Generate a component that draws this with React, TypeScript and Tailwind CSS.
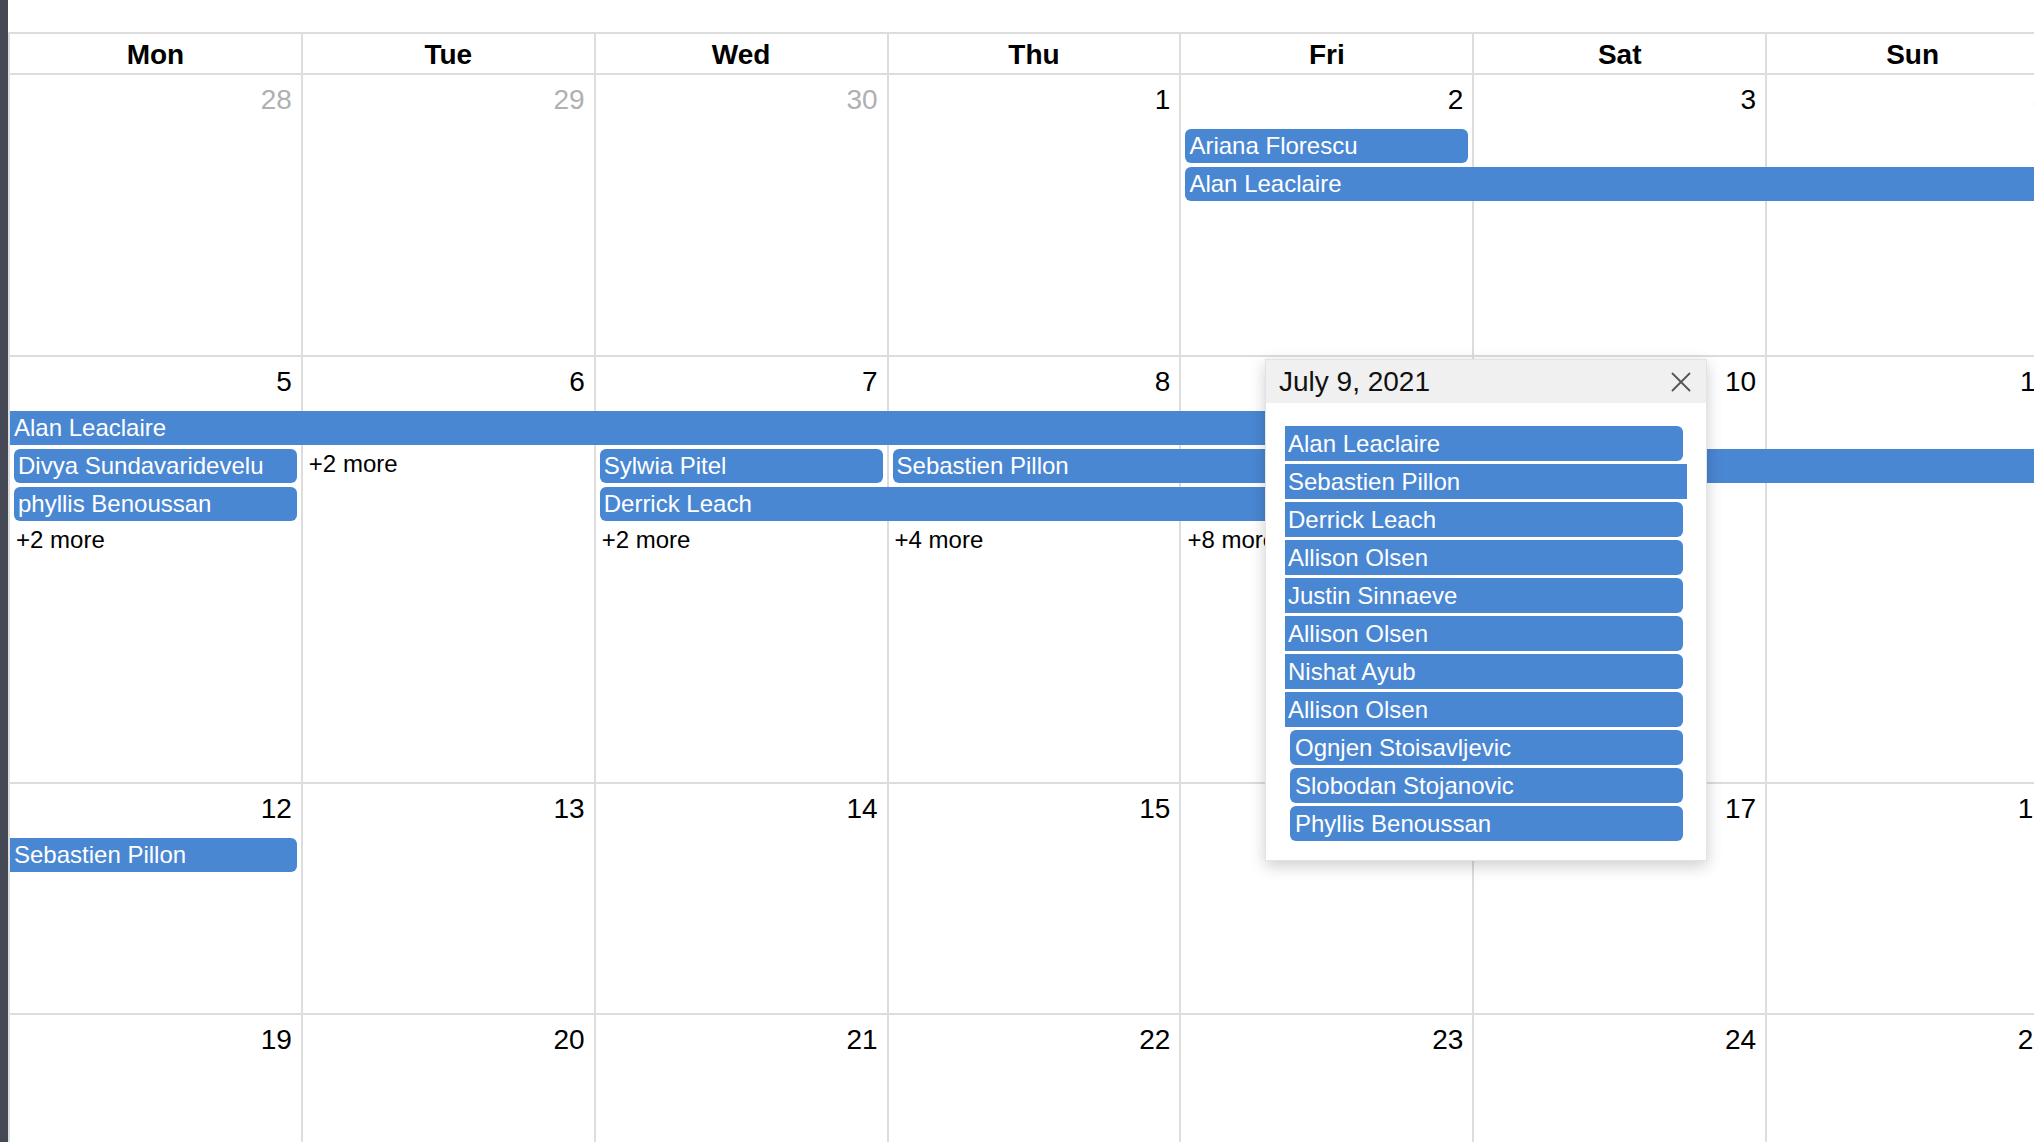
import { X } from 'lucide-react'

type CalEvent = {
  title: string
  col: number
  span?: number
  slot: number
  prior?: boolean
  after?: boolean
}

type MoreLink = { col: number; slot: number; count: number }

type Week = {
  height: string
  days: { n: number; off?: boolean }[]
  events: CalEvent[]
  more: MoreLink[]
}

const DAY_NAMES = ['Mon', 'Tue', 'Wed', 'Thu', 'Fri', 'Sat', 'Sun']

const COL_START: Record<number, string> = {
  1: 'col-start-1',
  2: 'col-start-2',
  3: 'col-start-3',
  4: 'col-start-4',
  5: 'col-start-5',
  6: 'col-start-6',
  7: 'col-start-7',
}

const COL_SPAN: Record<number, string> = {
  1: 'col-span-1',
  2: 'col-span-2',
  3: 'col-span-3',
  4: 'col-span-4',
  5: 'col-span-5',
}

// slot 1 sits in grid row 2 (row 1 holds the date numbers)
const ROW_START: Record<number, string> = {
  1: 'row-start-2',
  2: 'row-start-3',
  3: 'row-start-4',
  4: 'row-start-5',
}

const days = (from: number, offCount = 0) =>
  Array.from({ length: 7 }, (_, i) => {
    if (i < offCount) return { n: from + i, off: true }
    return { n: offCount ? i - offCount + 1 : from + i }
  })

const WEEKS: Week[] = [
  {
    height: 'h-[282px]',
    days: days(28, 3),
    events: [
      { title: 'Ariana Florescu', col: 5, slot: 1 },
      { title: 'Alan Leaclaire', col: 5, span: 3, slot: 2, after: true },
    ],
    more: [],
  },
  {
    height: 'h-[427px]',
    days: days(5),
    events: [
      { title: 'Alan Leaclaire', col: 1, span: 5, slot: 1, prior: true },
      { title: 'Divya Sundavaridevelu', col: 1, slot: 2 },
      { title: 'Sylwia Pitel', col: 3, slot: 2 },
      { title: 'Sebastien Pillon', col: 4, span: 4, slot: 2, after: true },
      { title: 'phyllis Benoussan', col: 1, slot: 3 },
      { title: 'Derrick Leach', col: 3, span: 3, slot: 3 },
    ],
    more: [
      { col: 2, slot: 2, count: 2 },
      { col: 1, slot: 4, count: 2 },
      { col: 3, slot: 4, count: 2 },
      { col: 4, slot: 4, count: 4 },
      { col: 5, slot: 4, count: 8 },
    ],
  },
  {
    height: 'h-[231px]',
    days: days(12),
    events: [{ title: 'Sebastien Pillon', col: 1, slot: 1, prior: true }],
    more: [],
  },
  {
    height: 'h-[231px]',
    days: days(19),
    events: [],
    more: [],
  },
]

const POPUP_EVENTS: { title: string; prior?: boolean; after?: boolean }[] = [
  { title: 'Alan Leaclaire', prior: true },
  { title: 'Sebastien Pillon', prior: true, after: true },
  { title: 'Derrick Leach', prior: true },
  { title: 'Allison Olsen', prior: true },
  { title: 'Justin Sinnaeve', prior: true },
  { title: 'Allison Olsen', prior: true },
  { title: 'Nishat Ayub', prior: true },
  { title: 'Allison Olsen', prior: true },
  { title: 'Ognjen Stoisavljevic' },
  { title: 'Slobodan Stojanovic' },
  { title: 'Phyllis Benoussan' },
]

function EventBar({ ev }: { ev: CalEvent }) {
  return (
    <div
      className={`${COL_START[ev.col]} ${COL_SPAN[ev.span ?? 1]} ${ROW_START[ev.slot]} self-start h-[34px] overflow-hidden truncate whitespace-nowrap bg-[#4a87d3] px-[4px] text-[24px] leading-[34px] text-white ${
        ev.prior ? 'ml-[2px] rounded-l-none' : 'ml-[6px] rounded-l-[6px]'
      } ${ev.after ? 'mr-0 rounded-r-none' : 'mr-[4px] rounded-r-[6px]'}`}
    >
      {ev.title}
    </div>
  )
}

function WeekRow({ week }: { week: Week }) {
  return (
    <div
      className={`grid ${week.height} grid-cols-7 grid-rows-[54px_38px_38px_38px_38px_1fr] border-b-2 border-[#dddddd]`}
    >
      {/* background cells */}
      {week.days.map((d, i) => (
        <div key={`bg-${d.n}`} className={`${COL_START[i + 1]} row-span-full border-l-2 border-[#dddddd]`} />
      ))}

      {/* date numbers */}
      {week.days.map((d, i) => (
        <div
          key={`n-${d.n}`}
          className={`${COL_START[i + 1]} row-start-1 pr-[9px] pt-[9px] text-right text-[28px] leading-[32px] ${
            d.off ? 'text-[#b0b0b0]' : 'text-black'
          }`}
        >
          {d.n}
        </div>
      ))}

      {week.events.map((ev) => (
        <EventBar key={`${ev.title}-${ev.col}-${ev.slot}`} ev={ev} />
      ))}

      {week.more.map((m) => (
        <div
          key={`more-${m.col}-${m.slot}`}
          className={`${COL_START[m.col]} ${ROW_START[m.slot]} self-start whitespace-nowrap pl-[8px] text-[24px] leading-[30px] text-black`}
        >
          +{m.count} more
        </div>
      ))}
    </div>
  )
}

function DayPopup() {
  return (
    <div className="absolute left-[1265px] top-[359px] w-[442px] border border-[#e3e3e3] bg-white shadow-[0_5px_15px_rgba(0,0,0,0.2)]">
      <div className="flex h-[43px] items-center justify-between bg-[#f0f0f0] pl-[13px] pr-[8px]">
        <span className="text-[28px] leading-[32px] text-[#111]">July 9, 2021</span>
        <X className="h-[34px] w-[34px] text-[#555]" strokeWidth={1.3} />
      </div>
      <div className="flex flex-col gap-[3px] pb-[19px] pl-[24px] pr-[23px] pt-[23px]">
        {POPUP_EVENTS.map((ev, i) => (
          <div
            key={i}
            className={`h-[35px] truncate whitespace-nowrap bg-[#4a87d3] text-[24px] leading-[35px] text-white ${
              ev.prior ? '-ml-[5px] rounded-l-none pl-[3px]' : 'rounded-l-[6px] pl-[5px]'
            } ${ev.after ? '-mr-[4px] rounded-r-none' : 'rounded-r-[6px]'}`}
          >
            {ev.title}
          </div>
        ))}
      </div>
    </div>
  )
}

export default function App() {
  return (
    <div className="relative h-[1142px] w-[2034px] overflow-hidden bg-white font-['Liberation_Sans',Arial,sans-serif] text-black">
      <div className="flex h-full">
        <div className="w-[8px] shrink-0 bg-[#454855]" />
        <div className="w-[2050px] shrink-0 pt-[32px]">
          {/* weekday header */}
          <div className="grid h-[43px] grid-cols-7 border-y-2 border-[#dddddd]">
            {DAY_NAMES.map((d) => (
              <div
                key={d}
                className="flex items-center justify-center border-l-2 border-[#dddddd] pt-[2px] text-[28px] font-bold leading-[32px]"
              >
                {d}
              </div>
            ))}
          </div>

          {WEEKS.map((w) => (
            <WeekRow key={w.days[0].n} week={w} />
          ))}
        </div>
      </div>

      <DayPopup />
    </div>
  )
}
